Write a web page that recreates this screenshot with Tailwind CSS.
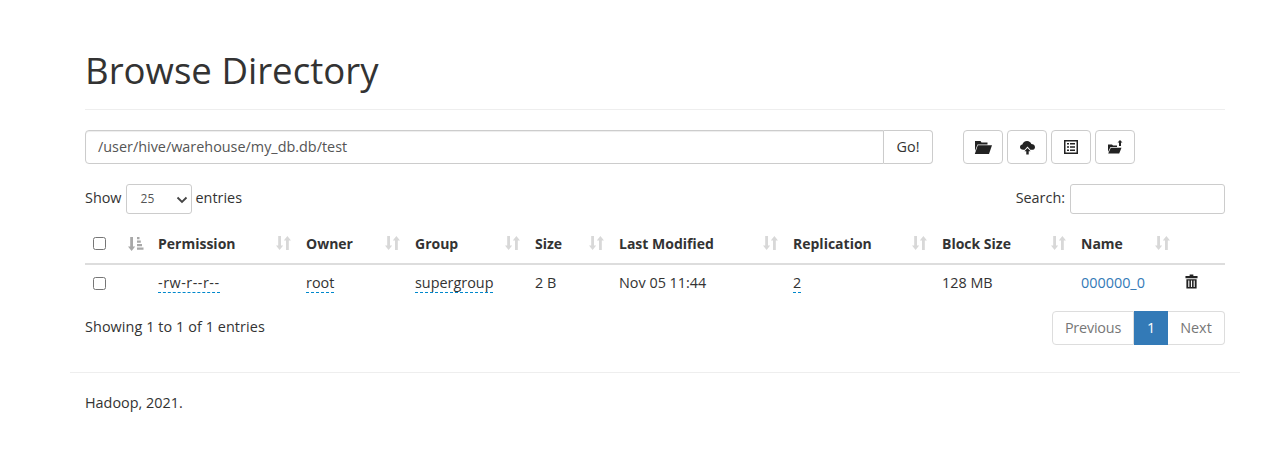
<!doctype html>
<html><head><meta charset="utf-8"><script src="https://cdn.jsdelivr.net/npm/@tailwindcss/browser@4"></script></head>
<body class="bg-white text-[#333] text-[14.4px] leading-[20px] font-['Open_Sans','Noto_Sans',sans-serif]">
<div class="w-[1170px] mx-auto px-[15px] h-[458px] ml-[70px]">
  <div class="pt-[50px] pb-[9px] mb-[20px] border-b border-[#eee] h-[110px]">
    <h1 class="text-[36.6px] leading-[40px] mt-0">Browse Directory</h1>
  </div>
  <div class="flex items-center h-[34px]">
    <div class="flex w-[848px]">
      <div class="flex-1 h-[34px] border border-[#ccc] rounded-l-[4px] px-[12px] text-[#555] flex items-center shadow-[inset_0_1px_1px_rgba(0,0,0,0.075)]">/user/hive/warehouse/my_db.db/test</div>
      <div class="h-[34px] w-[49px] border border-l-0 border-[#ccc] rounded-r-[4px] flex items-center justify-center">Go!</div>
    </div>
    <div class="flex gap-[4px] ml-[30px]">
      <div class="w-[40px] h-[34px] border border-[#ccc] rounded-[4px] flex items-center justify-center">
        <svg width="18" height="14" viewBox="0 0 18 14"><path d="M1 4V1h5.500l1 1.500h6V4.500H3.500L1 11z" fill="#222"/><path d="M3.800 5.300H18L15 14H0.800z" fill="#222"/></svg>
      </div>
      <div class="w-[40px] h-[34px] border border-[#ccc] rounded-[4px] flex items-center justify-center">
        <svg width="15" height="15" viewBox="0 0 16 15"><path d="M3.500 10C1.500 10 0 8.800 0 7 0 5.500 1.200 4.500 2.500 4.400 3 2 5 .5 7.500.5c2.400 0 4 1.400 4.600 3.300 2 0 3.900 1.300 3.900 3.300 0 1.700-1.300 2.900-3.300 2.900H11L8 6.500 5 10z" fill="#222"/><path d="M8 8l3.300 3.400H9.300V15H6.700v-3.600H4.700z" fill="#222"/></svg>
      </div>
      <div class="w-[40px] h-[34px] border border-[#ccc] rounded-[4px] flex items-center justify-center">
        <svg width="14" height="14" viewBox="0 0 14 14"><path fill-rule="evenodd" d="M0 0h14v14H0zM1.500 1.500v11h11v-11z" fill="#222"/><path d="M3 3h2v1.500H3zM6 3h5v1.500H6zM3 6.200h2v1.500H3zM6 6.200h5v1.500H6zM3 9.400h2v1.500H3zM6 9.400h5v1.500H6z" fill="#222"/></svg>
      </div>
      <div class="w-[40px] h-[34px] border border-[#ccc] rounded-[4px] flex items-center justify-center">
        <svg width="16" height="14" viewBox="0 0 16 14"><path d="M1 6V4.500h4l1 1h4V7H3.500L1 12z" fill="#222"/><path d="M3.800 7.800h10.700l-2.300 5.700H1.200z" fill="#222"/><path d="M13 0l2.500 2.500H14V6h-2V2.500h-1.500z" fill="#222"/></svg>
      </div>
    </div>
  </div>
  <div class="flex justify-between items-center mt-[20px] h-[30px]">
    <div class="flex items-center -mt-[2px] leading-[20px]">Show
      <div class="relative w-[66px] h-[30px] mx-[4px] mt-[2px] border border-[#ccc] rounded-[3px] text-[12px] flex items-center pl-[14px] text-[#555]">25
        <svg class="absolute right-[3px] top-[11px]" width="12" height="8" viewBox="0 0 12 8"><path d="M1.500 1.500L6 6l4.500-4.500" fill="none" stroke="#444" stroke-width="1.800"/></svg>
      </div>
      entries</div>
    <div class="flex items-center -mt-[2px]">Search:<div class="w-[155px] h-[30px] mt-[2px] ml-[5px] border border-[#ccc] rounded-[3px]"></div></div>
  </div>
  <table class="w-[1140px] mt-[10px] table-fixed border-collapse">
    <colgroup><col class="w-[35px]"><col class="w-[30px]"><col class="w-[148px]"><col class="w-[109px]"><col class="w-[120px]"><col class="w-[84px]"><col class="w-[174px]"><col class="w-[149px]"><col class="w-[139px]"><col class="w-[104px]"><col class="w-[48px]"></colgroup>
    <thead><tr class="h-[40px] border-b-2 border-[#ddd] font-bold text-left text-[14px]">
      <th class="p-0"><span class="ml-[8px] -mt-[1px] block w-[13px] h-[13px] border border-[#767676] rounded-[2.500px]"></span></th>
      <th class="p-0 pl-[8px]"><svg width="16" height="14" viewBox="0 0 16 14"><path d="M2.200 0h2.800v9.500h2.200L3.600 14 0 9.500h2.200z" fill="#a8a8a8"/><path d="M9 0h2.500v2.200H9zM9 3.500h3.800v2.200H9zM9 7h5v2.200H9zM9 10.500h6.500v2.200H9z" fill="#a8a8a8"/></svg></th>
      <th class="p-0 pl-[8px] relative font-bold">Permission<svg class="absolute right-[7px] top-[12px]" width="15" height="14" viewBox="0 0 15 14"><path d="M2.200 0h2.800v9.500h2.200L3.600 14 0 9.500h2.200zM10 14h2.800V4.500H15L11.400 0 7.800 4.500H10z" fill="#d8d8d8"/></svg></th>
      <th class="p-0 pl-[8px] relative font-bold">Owner<svg class="absolute right-[7px] top-[12px]" width="15" height="14" viewBox="0 0 15 14"><path d="M2.200 0h2.800v9.500h2.200L3.600 14 0 9.500h2.200zM10 14h2.800V4.500H15L11.400 0 7.800 4.500H10z" fill="#d8d8d8"/></svg></th>
      <th class="p-0 pl-[8px] relative font-bold">Group<svg class="absolute right-[7px] top-[12px]" width="15" height="14" viewBox="0 0 15 14"><path d="M2.200 0h2.800v9.500h2.200L3.600 14 0 9.500h2.200zM10 14h2.800V4.500H15L11.400 0 7.800 4.500H10z" fill="#d8d8d8"/></svg></th>
      <th class="p-0 pl-[8px] relative font-bold">Size<svg class="absolute right-[7px] top-[12px]" width="15" height="14" viewBox="0 0 15 14"><path d="M2.200 0h2.800v9.500h2.200L3.600 14 0 9.500h2.200zM10 14h2.800V4.500H15L11.400 0 7.800 4.500H10z" fill="#d8d8d8"/></svg></th>
      <th class="p-0 pl-[8px] relative font-bold">Last Modified<svg class="absolute right-[7px] top-[12px]" width="15" height="14" viewBox="0 0 15 14"><path d="M2.200 0h2.800v9.500h2.200L3.600 14 0 9.500h2.200zM10 14h2.800V4.500H15L11.400 0 7.800 4.500H10z" fill="#d8d8d8"/></svg></th>
      <th class="p-0 pl-[8px] relative font-bold">Replication<svg class="absolute right-[7px] top-[12px]" width="15" height="14" viewBox="0 0 15 14"><path d="M2.200 0h2.800v9.500h2.200L3.600 14 0 9.500h2.200zM10 14h2.800V4.500H15L11.400 0 7.800 4.500H10z" fill="#d8d8d8"/></svg></th>
      <th class="p-0 pl-[8px] relative font-bold">Block Size<svg class="absolute right-[7px] top-[12px]" width="15" height="14" viewBox="0 0 15 14"><path d="M2.200 0h2.800v9.500h2.200L3.600 14 0 9.500h2.200zM10 14h2.800V4.500H15L11.400 0 7.800 4.500H10z" fill="#d8d8d8"/></svg></th>
      <th class="p-0 pl-[8px] relative font-bold">Name<svg class="absolute right-[7px] top-[12px]" width="15" height="14" viewBox="0 0 15 14"><path d="M2.200 0h2.800v9.500h2.200L3.600 14 0 9.500h2.200zM10 14h2.800V4.500H15L11.400 0 7.800 4.500H10z" fill="#d8d8d8"/></svg></th>
      <th class="p-0"></th>
    </tr></thead>
    <tbody><tr class="h-[37px]">
      <td class="p-0"><span class="ml-[8px] block w-[13px] h-[13px] border border-[#767676] rounded-[2.500px]"></span></td>
      <td class="p-0"></td>
      <td class="p-0 pl-[8px]"><span class="border-b border-dashed border-[#08c] tracking-[0.5px]">-rw-r--r--</span></td>
      <td class="p-0 pl-[8px]"><span class="border-b border-dashed border-[#08c]">root</span></td>
      <td class="p-0 pl-[8px]"><span class="border-b border-dashed border-[#08c]">supergroup</span></td>
      <td class="p-0 pl-[8px]">2 B</td>
      <td class="p-0 pl-[8px]">Nov 05 11:44</td>
      <td class="p-0 pl-[8px]"><span class="border-b border-dashed border-[#08c]">2</span></td>
      <td class="p-0 pl-[8px]">128 MB</td>
      <td class="p-0 pl-[8px] text-[#337ab7]">000000_0</td>
      <td class="p-0 pl-[8px]"><svg class="-mt-[3px]" width="13" height="15" viewBox="0 0 14 15"><path d="M5 0h4v1.500h4.500V4H.5V1.500H5z" fill="#222"/><path fill-rule="evenodd" d="M1.500 5h11v10h-11zM3.500 6.500v7h1.200v-7zM6.400 6.500v7h1.200v-7zM9.300 6.500v7h1.200v-7z" fill="#222"/></svg></td>
    </tr></tbody>
  </table>
  <div class="flex justify-between items-start mt-[10px]">
    <div class="pt-[6px] tracking-[0.08px]">Showing 1 to 1 of 1 entries</div>
    <div class="flex h-[34px] text-[#777]">
      <div class="w-[82px] border border-[#ddd] rounded-l-[4px] flex items-center justify-center tracking-[-0.2px]">Previous</div>
      <div class="w-[34px] bg-[#337ab7] text-white flex items-center justify-center">1</div>
      <div class="w-[57px] border border-l-0 border-[#ddd] rounded-r-[4px] flex items-center justify-center">Next</div>
    </div>
  </div>
  <div class="-mx-[15px] mt-[27px] border-t border-[#eee] pt-[20px] px-[15px]">Hadoop, 2021.</div>
</div>
</body></html>
